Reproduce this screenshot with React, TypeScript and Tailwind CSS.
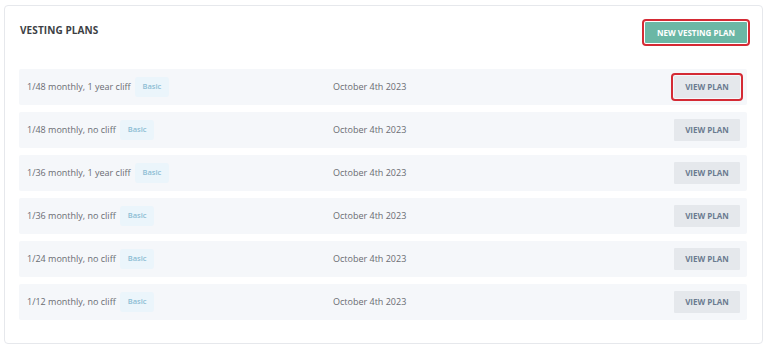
import React from "react";

const plans = [
  "1/48 monthly, 1 year cliff",
  "1/48 monthly, no cliff",
  "1/36 monthly, 1 year cliff",
  "1/36 monthly, no cliff",
  "1/24 monthly, no cliff",
  "1/12 monthly, no cliff",
];

export default function App() {
  return (
    <div
      className="w-[768px] h-[348px] bg-white pt-[5px] pl-[4px]"
      style={{ fontFamily: '"Open Sans", "Noto Sans", sans-serif' }}
    >
      <div className="w-[759px] h-[339px] border border-[#e6e8ec] rounded-[4px] pl-[14px] pr-[15px] pt-[16px]">
        <div className="flex items-start justify-between h-[47px]">
          <div className="pl-[1px] pt-[1px] text-[10px] font-bold text-[#3d3f45] tracking-[0.1px]">
            VESTING PLANS
          </div>
          <button className="w-[102px] h-[21px] bg-[#6bb7a5] rounded-[1px] text-white text-[8px] font-bold outline-2 outline-offset-[1px] outline-[#d42a34]">
            NEW VESTING PLAN
          </button>
        </div>
        <div className="flex flex-col gap-[7px]">
          {plans.map((p, i) => (
            <div
              key={i}
              className="h-[36px] bg-[#f5f7fa] rounded-[2px] flex items-center pl-[8px] pr-[7px]"
            >
              <div className="w-[306px] flex items-center gap-[4px]">
                <span className="text-[9px] text-[#6a6c72]">{p}</span>
                <span className="h-[20px] px-[8px] flex items-center bg-[#ebf5fb] rounded-[3px] text-[7.5px] font-semibold text-[#8dbdd4]">
                  Basic
                </span>
              </div>
              <div className="flex-1 text-[9px] text-[#6a6c72]">October 4th 2023</div>
              <button
                className={
                  "w-[66px] h-[22px] bg-[#e5e8ec] rounded-[1px] text-[8px] font-bold text-[#6b7b90] " +
                  (i === 0 ? "outline-2 outline-offset-[1px] outline-[#d42a34]" : "")
                }
              >
                VIEW PLAN
              </button>
            </div>
          ))}
        </div>
      </div>
    </div>
  );
}
